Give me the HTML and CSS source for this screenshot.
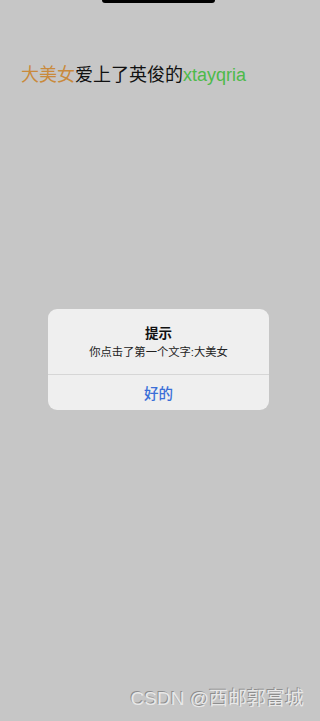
FILE: index.html
```html
<!DOCTYPE html>
<html lang="zh">
<head>
<meta charset="utf-8">
<link rel="stylesheet" href="styles.css">
</head>
<body>
<div class="notch"></div>
<main class="page">
  <p class="line"><span class="orange">大美女</span>爱上了英俊的<span class="green">xtayqria</span></p>
</main>
<div class="alert">
  <div class="alert-body">
    <div class="alert-title">提示</div>
    <div class="alert-msg">你点击了第一个文字:大美女</div>
  </div>
  <div class="alert-btn">好的</div>
</div>
<div class="watermark">CSDN @西邮郭富城</div>
</body>
</html>
```
FILE: styles.css
```css
html, body {
  margin: 0;
  padding: 0;
  height: 100%;
}
body {
  background: #c6c6c6;
  font-family: "Liberation Sans", "Noto Sans CJK SC", sans-serif;
  position: relative;
  overflow: hidden;
}
.notch {
  position: absolute;
  top: 0;
  left: 102px;
  width: 113px;
  height: 3px;
  background: #000;
  border-radius: 0 0 5px 5px;
}
.page {
  padding: 63px 0 0 21px;
}
.line {
  margin: 0;
  font-size: 18px;
  line-height: 24px;
  color: #111;
  white-space: nowrap;
}
.orange { color: #c98a3c; }
.green { color: #4dba4a; }
.alert {
  position: absolute;
  top: 309px;
  left: 48px;
  width: 221px;
  background: #efefef;
  border-radius: 9px;
  overflow: hidden;
}
.alert-body {
  padding: 16px 8px 15px;
  text-align: center;
  border-bottom: 1px solid #d6d6d6;
}
.alert-title {
  font-size: 13.5px;
  font-weight: bold;
  line-height: 18px;
  color: #111;
}
.alert-msg {
  margin-top: 2px;
  font-size: 11.3px;
  line-height: 14px;
  color: #222;
}
.alert-btn {
  height: 35px;
  display: flex;
  align-items: center;
  justify-content: center;
  font-size: 14.5px;
  font-weight: 500;
  color: #3b6fd8;
}
.watermark {
  position: absolute;
  right: 16px;
  bottom: 11px;
  font-size: 19px;
  line-height: 22px;
  color: #e8e8e8;
  text-shadow: -1px -1px 0 #8e8e8e;
  white-space: nowrap;
}
```
